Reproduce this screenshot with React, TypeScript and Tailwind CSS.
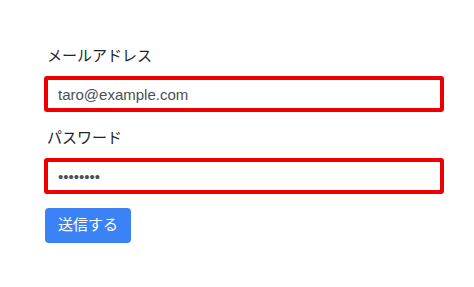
import React from "react";

const font = { fontFamily: '"Liberation Sans", "Noto Sans CJK JP", sans-serif' };

const App = () => {
  return (
    <div className="min-h-[287px] bg-white pl-[44px] pt-[44px]" style={font}>
      <form className="w-[400px]" onSubmit={(e) => e.preventDefault()}>
        {/* email */}
        <div className="mb-[14px]">
          <label className="mb-2 block pl-[3px] text-[15px] leading-6 text-[#212529]">
            メールアドレス
          </label>
          <input
            type="email"
            defaultValue="taro@example.com"
            className="block h-[36px] w-full rounded-[3px] border-4 border-[#ee0000] bg-white px-[10px] text-[15px] text-[#495057] outline-none"
          />
        </div>

        {/* password */}
        <div className="mb-[14px]">
          <label className="mb-2 block pl-[3px] text-[15px] leading-6 text-[#212529]">
            パスワード
          </label>
          <input
            type="password"
            defaultValue="password"
            className="block h-[36px] w-full rounded-[3px] border-4 border-[#ee0000] bg-white px-[10px] text-[15px] text-[#495057] outline-none"
          />
        </div>

        <button
          type="submit"
          className="ml-[1px] h-[35px] rounded-[4px] bg-[#3b82f6] px-[13px] text-[15px] text-white"
        >
          送信する
        </button>
      </form>
    </div>
  );
};

export default App;
